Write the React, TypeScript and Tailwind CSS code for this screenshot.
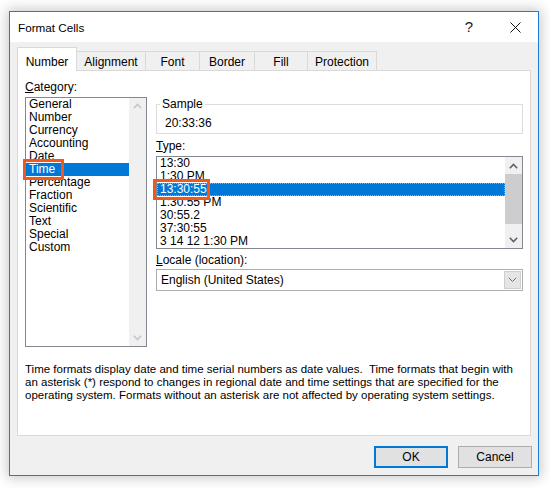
import React from "react";

const font = { fontFamily: '"Liberation Sans", Arial, sans-serif' };

const categories = [
  "General",
  "Number",
  "Currency",
  "Accounting",
  "Date",
  "Time",
  "Percentage",
  "Fraction",
  "Scientific",
  "Text",
  "Special",
  "Custom",
];

const types = ["13:30", "1:30 PM", "13:30:55", "1:30:55 PM", "30:55.2", "37:30:55", "3 14 12 1:30 PM"];

const tabs = [
  { label: "Number", w: "w-[60px]" },
  { label: "Alignment", w: "w-[70px]" },
  { label: "Font", w: "w-[55px]" },
  { label: "Border", w: "w-[56px]" },
  { label: "Fill", w: "w-[54px]" },
  { label: "Protection", w: "w-[70px]" },
];

const Chevron: React.FC<{ up?: boolean; color: string }> = ({ up, color }) => (
  <svg width="9" height="6" viewBox="0 0 9 6">
    <path
      d={up ? "M0.8 5.2 L4.5 1.5 L8.2 5.2" : "M0.8 0.8 L4.5 4.5 L8.2 0.8"}
      fill="none"
      stroke={color}
      strokeWidth="1.6"
    />
  </svg>
);

const App: React.FC = () => {
  return (
    <div className="w-[550px] h-[488px] bg-white pl-[9px] pt-[11px] text-[12px] text-black" style={font}>
      <div className="w-[530px] h-[465px] border border-[#1a7fd6] bg-[#f0f0f0] flex flex-col shadow-[0_0_12px_2px_rgba(0,0,0,0.22)]">
        {/* title bar */}
        <div className="h-[30px] bg-white flex items-center justify-between">
          <span className="pl-[8px] text-[11.7px] leading-[15px]">Format Cells</span>
          <div className="flex h-full">
            <div className="w-[46px] h-full flex items-center justify-center text-[15px] text-[#222]">?</div>
            <div className="w-[46px] h-full flex items-center justify-center">
              <svg width="11" height="11" viewBox="0 0 11 11">
                <path d="M0.5 0.5 L10.5 10.5 M10.5 0.5 L0.5 10.5" stroke="#111" strokeWidth="1" />
              </svg>
            </div>
          </div>
        </div>

        {/* body */}
        <div className="flex flex-col pl-[7px] pt-[5px]">
          <div className="relative z-10 flex items-end h-[24px]">
            {tabs.map((t, i) =>
              i === 0 ? (
                <div
                  key={t.label}
                  className={`${t.w} h-[24px] bg-white border-l border-t border-r border-[#d9d9d9] flex justify-center pt-[7px] leading-[15px] relative z-10`}
                >
                  {t.label}
                </div>
              ) : (
                <div
                  key={t.label}
                  className={`${t.w} h-[20px] -ml-px bg-[#f0f0f0] border border-[#d9d9d9] flex justify-center pt-[3px] leading-[15px]`}
                >
                  {t.label}
                </div>
              )
            )}
          </div>

          {/* panel */}
          <div className="-mt-px w-[514px] h-[366px] bg-white border border-[#d9d9d9] pl-[7px] pt-[9px] flex flex-col">
            <div className="leading-[15px]">
              <span className="underline">C</span>ategory:
            </div>
            <div className="mt-[2px] flex gap-[9px]">
              {/* category list */}
              <div className="relative w-[122px] h-[250px] border border-[#828790] flex">
                <div className="flex-1 flex flex-col">
                  {categories.map((c) => (
                    <div
                      key={c}
                      className={`h-[13px] leading-[13px] pl-[3px] ${c === "Time" ? "bg-[#0078d7] text-white" : ""}`}
                    >
                      {c}
                    </div>
                  ))}
                </div>
                <div className="w-[17px] bg-[#f0f0f0] flex flex-col justify-between items-center py-[5px]">
                  <Chevron up color="#c6c6c6" />
                  <Chevron color="#c6c6c6" />
                </div>
                <div className="absolute left-[-3px] top-[61px] w-[41px] h-[21px] border-[3px] border-[#f2581b]" />
              </div>

              {/* right column */}
              <div className="w-[367px] flex flex-col">
                <fieldset className="h-[37px] border border-[#dcdcdc] pl-[8px] pt-[4px]">
                  <legend className="ml-[-5px] px-[2px] leading-[15px]">Sample</legend>
                  <div className="leading-[15px]">20:33:36</div>
                </fieldset>

                <div className="mt-[5px] leading-[15px]">
                  <span className="underline">T</span>ype:
                </div>
                <div className="relative mt-[2px] h-[93px] border border-[#828790] flex">
                  <div className="flex-1 flex flex-col">
                    {types.map((t) => (
                      <div
                        key={t}
                        className={`h-[13px] leading-[13px] pl-[3px] ${
                          t === "13:30:55" ? "bg-[#0078d7] text-white outline outline-1 outline-dotted outline-offset-[-1px] outline-[#e0a030]" : ""
                        }`}
                      >
                        {t}
                      </div>
                    ))}
                  </div>
                  <div className="w-[17px] bg-[#f0f0f0] flex flex-col items-center">
                    <div className="h-[17px] flex items-center justify-center">
                      <Chevron up color="#606060" />
                    </div>
                    <div className="w-[17px] h-[50px] bg-[#cdcdcd]" />
                    <div className="flex-1" />
                    <div className="h-[17px] flex items-center justify-center">
                      <Chevron color="#606060" />
                    </div>
                  </div>
                  <div className="absolute left-[-4px] top-[22px] w-[57px] h-[21px] border-[3px] border-[#f2581b]" />
                </div>

                <div className="mt-[4px] leading-[15px]">
                  <span className="underline">L</span>ocale (location):
                </div>
                <div className="mt-px h-[22px] border border-[#adadad] flex items-center">
                  <div className="flex-1 pl-[4px] leading-[15px]">English (United States)</div>
                  <div className="w-[17px] h-[18px] mr-px bg-[#e5e5e5] border border-[#cfcfcf] flex items-center justify-center">
                    <svg width="9" height="6" viewBox="0 0 9 6">
                      <path d="M0.8 0.8 L4.5 4.5 L8.2 0.8" fill="none" stroke="#707070" strokeWidth="1" />
                    </svg>
                  </div>
                </div>
              </div>
            </div>

            <p className="mt-[16px] text-[11.5px] leading-[13px] whitespace-pre">
              {"Time formats display date and time serial numbers as date values.  Time formats that begin with\nan asterisk (*) respond to changes in regional date and time settings that are specified for the\noperating system. Formats without an asterisk are not affected by operating system settings."}
            </p>
          </div>

          {/* buttons */}
          <div className="mt-[10px] flex justify-end gap-[10px] pr-[6px]">
            <button className="w-[74px] h-[22px] bg-[#e1e1e1] border-2 border-[#0078d7] leading-[15px]">OK</button>
            <button className="w-[74px] h-[22px] bg-[#e1e1e1] border border-[#adadad] leading-[15px]">Cancel</button>
          </div>
        </div>
      </div>
    </div>
  );
};

export default App;
